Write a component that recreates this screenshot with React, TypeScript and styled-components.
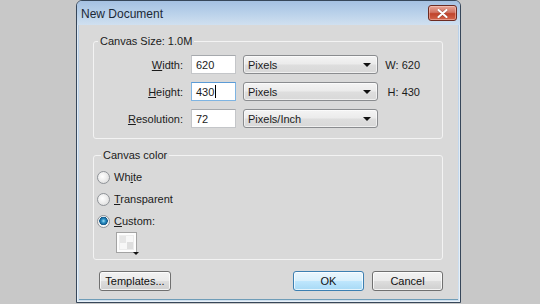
import * as React from 'react'
import styled, { createGlobalStyle } from 'styled-components'

const GlobalStyle = createGlobalStyle`
  html, body {
    margin: 0;
    padding: 0;
    background: #c8c8c8;
    font-family: "Liberation Sans", Arial, sans-serif;
    font-size: 11px;
    color: #1b1b1b;
  }
`

const Page = styled.div`
  width: 540px;
  height: 304px;
  padding-left: 76px;
  box-sizing: border-box;
  overflow: hidden;
`

const Window = styled.div`
  width: 385px;
  box-sizing: border-box;
  border: 1px solid #37475a;
  border-radius: 6px 6px 0 0;
  background: linear-gradient(to bottom, #b7cfe8, #cfe0f0);
  display: flex;
  flex-direction: column;
  box-shadow: inset 0 0 0 1px rgba(255, 255, 255, 0.55);
`

const TitleBar = styled.div`
  height: 24px;
  display: flex;
  align-items: center;
  justify-content: space-between;
  padding: 0 3px 0 4px;
  border-radius: 5px 5px 0 0;
  background: linear-gradient(to bottom, #a5c1e2 0%, #b9d1ea 50%, #d0e0f0 100%);
`

const Title = styled.span`
  font-size: 12px;
  color: #1c2836;
  padding-top: 1px;
`

const CloseButton = styled.div`
  width: 29px;
  height: 16px;
  box-sizing: border-box;
  border: 1px solid #6c2b22;
  border-radius: 3px;
  background: linear-gradient(to bottom, #e8a597 0%, #d27462 45%, #c0432b 55%, #d2654b 100%);
  box-shadow: inset 0 0 0 1px rgba(255, 220, 210, 0.45);
  display: flex;
  align-items: center;
  justify-content: center;
`

const Body = styled.div`
  margin: 0 2px 2px;
  background: #d9d9d9;
  padding: 10px 15px 8px 14px;
  display: flex;
  flex-direction: column;
  border-bottom: 1px solid #6f9db8;
`

const Group = styled.fieldset<{ $gap?: number }>`
  margin: ${p => p.$gap || 0}px 0 0;
  padding: ${p => (p.$gap ? '7px 0 6px 3px' : '7px 0 10px 0')};
  border: 1px solid #f3f3f3;
  border-radius: 3px;
  min-width: 0;
`

const Legend = styled.legend`
  margin-left: 4px;
  padding: 0 2px;
  font-size: 11px;
  line-height: 13px;
  color: #1b1b1b;
`

const SizeGrid = styled.div`
  display: grid;
  grid-template-columns: 89px 45px 134px 34px;
  grid-auto-rows: 19px;
  column-gap: 8px;
  row-gap: 8px;
  align-items: center;
  & > :nth-child(4n + 3) {
    margin-left: -1px;
  }
  & > :nth-child(4n) {
    margin-left: -4px;
  }
`

const Label = styled.label`
  text-align: right;
  white-space: nowrap;
`

const Key = styled.span`
  text-decoration: underline;
  text-underline-offset: 1px;
`

const TextBox = styled.div<{ $focus?: boolean }>`
  height: 19px;
  box-sizing: border-box;
  background: #fff;
  border: 1px solid ${p => (p.$focus ? '#7eb4e2' : '#c4c6c9')};
  border-top-color: ${p => (p.$focus ? '#5b9bd6' : '#a6a9ad')};
  display: flex;
  align-items: center;
  padding-left: 4px;
`

const Caret = styled.span`
  display: inline-block;
  width: 1px;
  height: 13px;
  background: #000;
  margin-left: 1px;
`

const Select = styled.div`
  height: 19px;
  box-sizing: border-box;
  border: 1px solid #8a8c8f;
  border-radius: 3px;
  background: linear-gradient(to bottom, #f4f4f4 0%, #ebebeb 48%, #dedede 52%, #d8d8d8 100%);
  box-shadow: inset 0 0 0 1px rgba(255, 255, 255, 0.6);
  display: flex;
  align-items: center;
  justify-content: space-between;
  padding: 0 6px 0 4px;
`

const Arrow = styled.span`
  width: 0;
  height: 0;
  border-left: 4px solid transparent;
  border-right: 4px solid transparent;
  border-top: 4px solid #111;
`

const Info = styled.span`
  text-align: right;
  white-space: nowrap;
`

const RadioList = styled.div`
  display: flex;
  flex-direction: column;
  gap: 6px;
`

const RadioRow = styled.div`
  height: 16px;
  display: flex;
  align-items: center;
  gap: 4px;
`

const RadioDot = styled.span<{ $on?: boolean }>`
  width: 13px;
  height: 13px;
  box-sizing: border-box;
  border-radius: 50%;
  border: 1px solid #8f9398;
  background: ${p =>
    p.$on
      ? 'radial-gradient(circle at 50% 45%, #9fe0f6 0, #2a8fc4 2px, #145a8a 4px, #f2f2f2 4.5px, #fafafa 100%)'
      : 'radial-gradient(circle at 40% 40%, #ffffff 0, #f0f0f0 40%, #d6d6d6 100%)'};
`

const Swatch = styled.div`
  margin: 3px 0 0 19px;
  width: 21px;
  height: 21px;
  box-sizing: border-box;
  border: 1px solid #a3a3a3;
  padding: 2px;
  background: #fdfdfd;
  position: relative;
`

const SwatchFill = styled.div`
  width: 100%;
  height: 100%;
  background: conic-gradient(#f7f7f7 0 25%, #dedede 0 50%, #f7f7f7 0 75%, #e6e6e6 0);
  border: 1px solid #ececec;
  box-sizing: border-box;
`

const SwatchArrow = styled.span`
  position: absolute;
  right: -3px;
  bottom: -3px;
  width: 0;
  height: 0;
  border-left: 3px solid transparent;
  border-right: 3px solid transparent;
  border-top: 3px solid #111;
`

const ButtonRow = styled.div`
  margin-top: 11px;
  padding-left: 6px;
  display: flex;
  align-items: center;
  gap: 8px;
`

const Spacer = styled.div`
  flex: 1;
`

const Button = styled.div<{ $w: number; $default?: boolean }>`
  width: ${p => p.$w}px;
  height: 20px;
  box-sizing: border-box;
  border: 1px solid ${p => (p.$default ? '#3c7fb1' : '#707070')};
  border-radius: 3px;
  background: ${p =>
    p.$default
      ? 'linear-gradient(to bottom, #eaf6fd 0%, #d9f0fc 48%, #bee6fd 52%, #a7d9f5 100%)'
      : 'linear-gradient(to bottom, #f2f2f2 0%, #ebebeb 48%, #dddddd 52%, #cfcfcf 100%)'};
  box-shadow: inset 0 0 0 1px ${p => (p.$default ? 'rgba(255,255,255,0.7)' : 'rgba(255,255,255,0.75)')};
  display: flex;
  align-items: center;
  justify-content: center;
  color: #111;
`

const sizeRows = [
  { key: 'W', rest: 'idth:', value: '620', unit: 'Pixels', info: 'W: 620' },
  { key: 'H', rest: 'eight:', value: '430', unit: 'Pixels', info: 'H: 430', focus: true },
  { key: 'R', rest: 'esolution:', value: '72', unit: 'Pixels/Inch', info: '' }
]

export default function App() {
  return (
    <Page>
      <GlobalStyle />
      <Window>
        <TitleBar>
          <Title>New Document</Title>
          <CloseButton>
            <svg width="11" height="9" viewBox="0 0 11 9">
              <path d="M1.5 1 L9.5 8 M9.5 1 L1.5 8" stroke="#5a1e14" strokeWidth="3.2" strokeLinecap="round" opacity="0.35" />
              <path d="M1.5 1 L9.5 8 M9.5 1 L1.5 8" stroke="#fff" strokeWidth="2.2" strokeLinecap="round" />
            </svg>
          </CloseButton>
        </TitleBar>
        <Body>
          <Group>
            <Legend>Canvas Size: 1.0M</Legend>
            <SizeGrid>
              {sizeRows.map(r => (
                <React.Fragment key={r.key}>
                  <Label>
                    <Key>{r.key}</Key>
                    {r.rest}
                  </Label>
                  <TextBox $focus={r.focus}>
                    {r.value}
                    {r.focus && <Caret />}
                  </TextBox>
                  <Select>
                    <span>{r.unit}</span>
                    <Arrow />
                  </Select>
                  <Info>{r.info}</Info>
                </React.Fragment>
              ))}
            </SizeGrid>
          </Group>
          <Group $gap={10}>
            <Legend>Canvas color</Legend>
            <RadioList>
              <RadioRow>
                <RadioDot />
                <span>
                  Wh<Key>i</Key>te
                </span>
              </RadioRow>
              <RadioRow>
                <RadioDot />
                <span>
                  <Key>T</Key>ransparent
                </span>
              </RadioRow>
              <RadioRow>
                <RadioDot $on />
                <span>
                  <Key>C</Key>ustom:
                </span>
              </RadioRow>
            </RadioList>
            <Swatch>
              <SwatchFill />
              <SwatchArrow />
            </Swatch>
          </Group>
          <ButtonRow>
            <Button $w={72}>Templates...</Button>
            <Spacer />
            <Button $w={71} $default>
              OK
            </Button>
            <Button $w={71}>Cancel</Button>
          </ButtonRow>
        </Body>
      </Window>
    </Page>
  )
}
